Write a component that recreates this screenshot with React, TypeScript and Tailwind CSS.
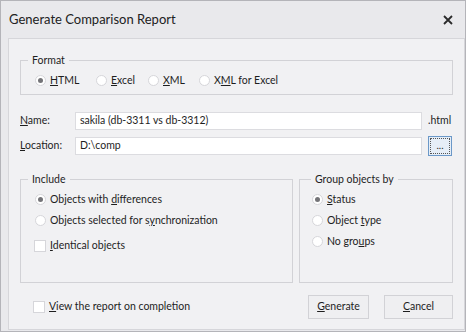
function Radio({ checked, label }: { checked?: boolean; label: React.ReactNode }) {
    return (
        <div className="flex items-center h-[21px]">
            <span className="w-[11px] h-[11px] rounded-full bg-white border border-[#d6d6da] flex items-center justify-center">
                {checked && <span className="w-[5px] h-[5px] rounded-full bg-[#747478]" />}
            </span>
            <span className="ml-[4px]">{label}</span>
        </div>
    );
}

function Check({ label }: { label: React.ReactNode }) {
    return (
        <div className="flex items-center h-[21px]">
            <span className="w-[12px] h-[12px] bg-white border border-[#d6d6da]" />
            <span className="ml-[4px]">{label}</span>
        </div>
    );
}

export default function App() {
    return (
        <div className="w-[474px] h-[336px] bg-white font-['Segoe_UI','Lato',sans-serif] text-[10.5px] text-[#1e1e1e]">
            <div className="w-[466px] h-[332px] border border-[#b4b4b9] bg-[#e9e9ec] flex flex-col">
                <div className="h-[37px] flex items-center justify-between pl-[8px] pr-[12px]">
                    <span className="text-[13px] text-[#222]">Generate Comparison Report</span>
                    <svg width="10" height="10" viewBox="0 0 10 10">
                        <path d="M1 1 L9 9 M9 1 L1 9" stroke="#2a2a2a" strokeWidth="1.8" />
                    </svg>
                </div>
                <div className="flex-1 ml-[7px] mb-[1px] border border-[#d6d6da] bg-[#f1f1f3] px-[11px] pt-[13px] flex flex-col">
                    <fieldset className="border border-[#d2d2d6]">
                        <legend className="ml-[7px] px-[4px] leading-[16px]">Format</legend>
                        <div className="flex items-center pl-[14px] pt-[2px] pb-[3px] gap-0">
                            <div className="w-[61px]"><Radio checked label={<><u>H</u>TML</>} /></div>
                            <div className="w-[52px]"><Radio label={<><u>E</u>xcel</>} /></div>
                            <div className="w-[51px]"><Radio label={<><u>X</u>ML</>} /></div>
                            <Radio label={<>X<u>M</u>L for Excel</>} />
                        </div>
                    </fieldset>
                    <div className="mt-[17px] flex items-center h-[18px]">
                        <span className="w-[55px]"><u>N</u>ame:</span>
                        <div className="w-[347px] h-[18px] bg-white border border-[#dcdce0] flex items-center px-[4px]">sakila (db-3311 vs db-3312)</div>
                        <span className="ml-[6px]">.html</span>
                    </div>
                    <div className="mt-[6px] flex items-center h-[20px]">
                        <span className="w-[55px]"><u>L</u>ocation:</span>
                        <div className="w-[347px] h-[18px] bg-white border border-[#dcdce0] flex items-center px-[4px]">D:\comp</div>
                        <div className="ml-[6px] w-[24px] h-[20px] border border-[#6b98c8] bg-[#e6eef7] p-[1px]">
                            <div className="w-full h-full border border-dotted border-[#555] flex items-center justify-center text-[10px] leading-none pb-[3px]">...</div>
                        </div>
                    </div>
                    <div className="mt-[15px] flex gap-[6px]">
                        <fieldset className="w-[273px] border border-[#d2d2d6]">
                            <legend className="ml-[7px] px-[4px] leading-[16px]">Include</legend>
                            <div className="h-[95px] pl-[14px] pt-[2px]">
                                <Radio checked label={<>Objects with <u>d</u>ifferences</>} />
                                <Radio label={<>Objects selected for s<u>y</u>nchronization</>} />
                                <div className="mt-[4px] -ml-[1px]"><Check label={<><u>I</u>dentical objects</>} /></div>
                            </div>
                        </fieldset>
                        <fieldset className="flex-1 border border-[#d2d2d6]">
                            <legend className="ml-[11px] px-[4px] leading-[16px]">Group objects by</legend>
                            <div className="h-[95px] pl-[12px] pt-[2px]">
                                <Radio checked label={<><u>S</u>tatus</>} />
                                <Radio label={<>Object <u>t</u>ype</>} />
                                <Radio label={<>No gro<u>u</u>ps</>} />
                            </div>
                        </fieldset>
                    </div>
                    <div className="mt-[12px] flex items-center">
                        <div className="pl-[13px] flex-1">
                            <Check label={<><u>V</u>iew the report on completion</>} />
                        </div>
                        <button className="w-[61px] h-[24px] border border-[#d2d2d6] bg-[#efeff1]"><u>G</u>enerate</button>
                        <button className="ml-[15px] w-[69px] h-[24px] border border-[#d2d2d6] bg-[#efeff1]"><u>C</u>ancel</button>
                    </div>
                </div>
            </div>
        </div>
    );
}
